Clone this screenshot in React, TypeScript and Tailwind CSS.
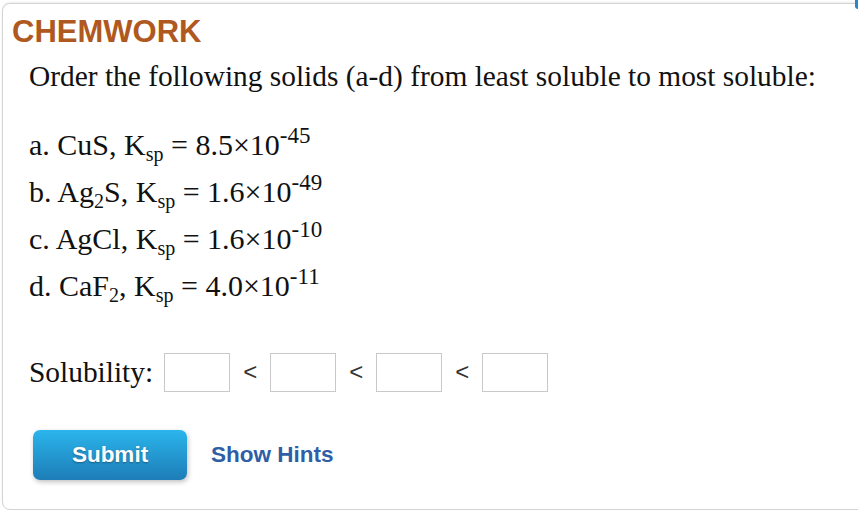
import React from 'react';

const SERIF = 'font-["Liberation_Serif","Times_New_Roman",serif]';
const SANS = 'font-["Liberation_Sans",Arial,sans-serif]';

const SOLIDS = [
  { key: 'a', formula: <>CuS</>, mant: '8.5', exp: '-45' },
  { key: 'b', formula: <>Ag<sub className="text-[20px] bottom-[-6px]">2</sub>S</>, mant: '1.6', exp: '-49' },
  { key: 'c', formula: <>AgCl</>, mant: '1.6', exp: '-10' },
  { key: 'd', formula: <>CaF<sub className="text-[20px] bottom-[-6px]">2</sub></>, mant: '4.0', exp: '-11' },
];

function AnswerBox() {
  return <div className="w-[66px] h-[39px] border border-[#c9c9c9] bg-white" />;
}

function Less() {
  return <span className={`mx-[13px] ${SANS} text-[24px] text-[#333]`}>&lt;</span>;
}

export default function App() {
  return (
    <div className="relative w-[858px] h-[512px] overflow-hidden bg-white">
      <div className="absolute top-0 right-0 w-[3px] h-[9px] bg-[#2a86c8] rounded-bl-[3px]" />
      <div className="ml-[2px] mt-[3px] w-[900px] h-[507px] rounded-[8px] border border-[#d4d4d4] shadow-[0_-1px_2px_rgba(0,0,0,0.08)] bg-white pl-[9px] pt-[12px]">
        <h1 className={`${SANS} font-bold text-[31px] leading-[31px] text-[#af5820]`}>
          CHEMWORK
        </h1>

        <div className={`${SERIF} text-[#111] pl-[17px]`}>
          <p className="mt-[14px] text-[29.4px] leading-[30px]">
            Order the following solids (a-d) from least soluble to most soluble:
          </p>

          <ul className="mt-[30px] text-[30px] leading-[47px]">
            {SOLIDS.map(s => (
              <li key={s.key}>
                {s.key}. {s.formula}, K<sub className="text-[20px] bottom-[-6px]">sp</sub> = {s.mant}×10
                <sup className="text-[23px] top-[-12px]">{s.exp}</sup>
              </li>
            ))}
          </ul>

          <div className="mt-[41px] flex items-center text-[29.4px]">
            <span className="mr-[11px]">Solubility:</span>
            <AnswerBox />
            <Less />
            <AnswerBox />
            <Less />
            <AnswerBox />
            <Less />
            <AnswerBox />
          </div>
        </div>

        <div className={`mt-[36px] ml-[21px] flex items-center gap-[24px] ${SANS} font-bold text-[22.5px]`}>
          <button className="w-[154px] h-[50px] rounded-[7px] bg-gradient-to-b from-[#2bb5ec] to-[#1e7db7] text-white shadow-[1px_2px_5px_rgba(0,0,0,0.25)] [text-shadow:0_1px_2px_rgba(0,0,0,0.35)]">
            Submit
          </button>
          <span className="text-[#2f5ea6]">Show Hints</span>
        </div>
      </div>
    </div>
  );
}
